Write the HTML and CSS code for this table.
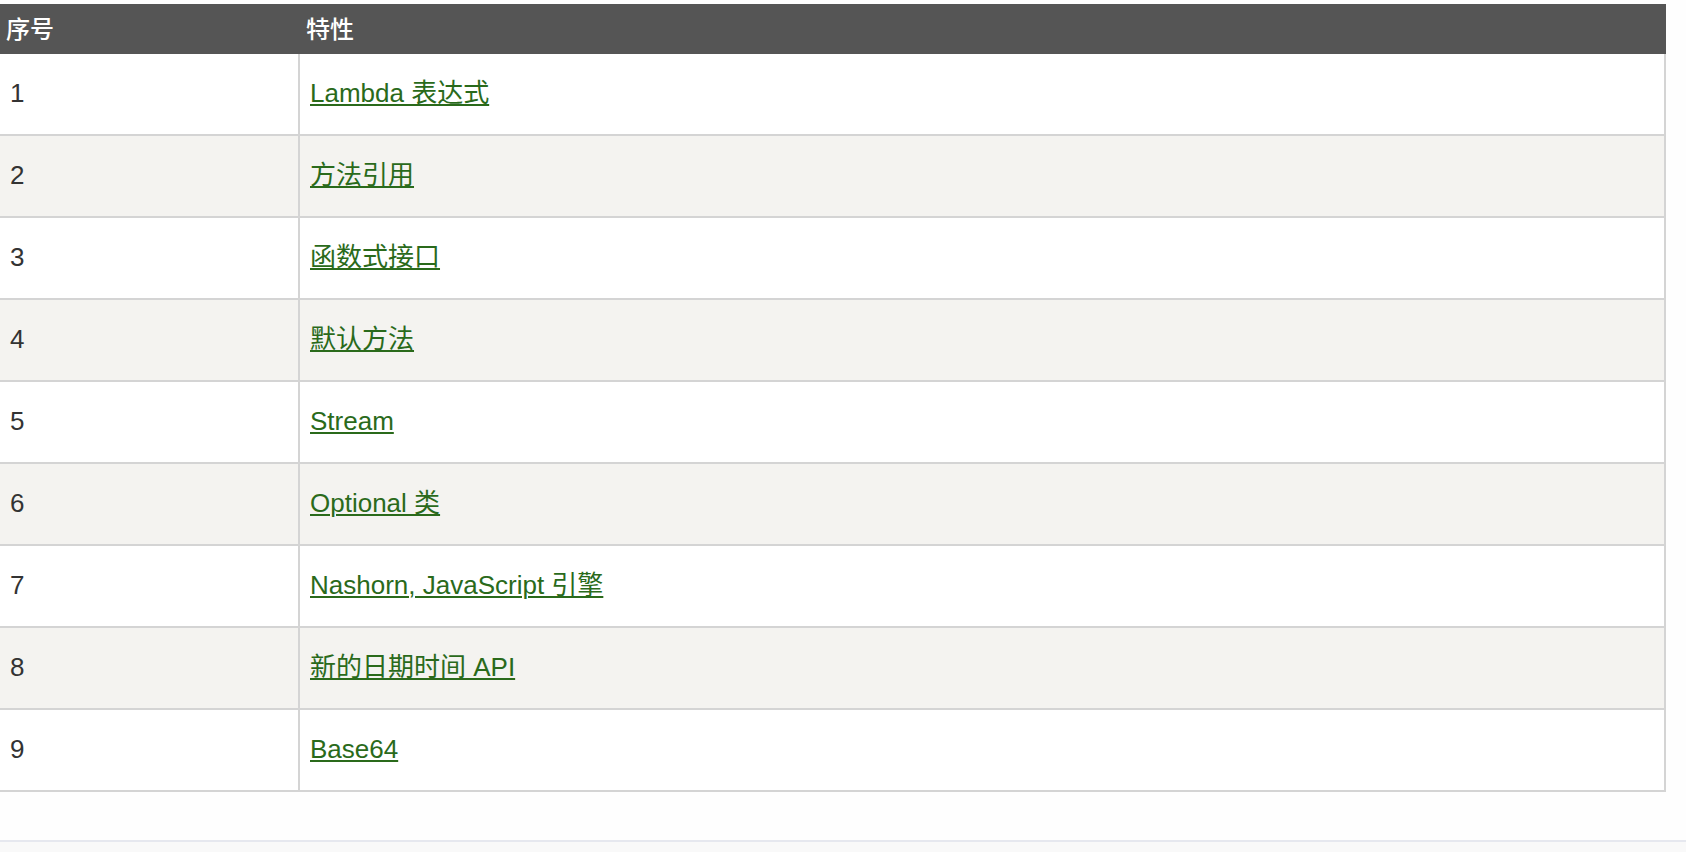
FILE: index.html
```html
<!DOCTYPE html>
<html lang="zh-CN">
<head>
<meta charset="utf-8">
<title>Java 8 新特性</title>
<link rel="stylesheet" href="styles.css">
</head>
<body>
<div class="page">
  <table class="features">
    <colgroup>
      <col class="col-num">
      <col class="col-feat">
    </colgroup>
    <thead>
      <tr><th>序号</th><th>特性</th></tr>
    </thead>
    <tbody>
      <tr><td>1</td><td><a href="#">Lambda 表达式</a></td></tr>
      <tr><td>2</td><td><a href="#">方法引用</a></td></tr>
      <tr><td>3</td><td><a href="#">函数式接口</a></td></tr>
      <tr><td>4</td><td><a href="#">默认方法</a></td></tr>
      <tr><td>5</td><td><a href="#">Stream</a></td></tr>
      <tr><td>6</td><td><a href="#">Optional 类</a></td></tr>
      <tr><td>7</td><td><a href="#">Nashorn, JavaScript 引擎</a></td></tr>
      <tr><td>8</td><td><a href="#">新的日期时间 API</a></td></tr>
      <tr><td>9</td><td><a href="#">Base64</a></td></tr>
    </tbody>
  </table>
  <div class="next-section"></div>
</div>
</body>
</html>
```
FILE: styles.css
```css
html, body {
  margin: 0;
  padding: 0;
  background: #fefefe;
}
body {
  font-family: "Liberation Sans", "Noto Sans CJK SC", sans-serif;
  color: #333333;
}
.page {
  padding-top: 4px;
  width: 1686px;
  height: 848px;
  display: flex;
  flex-direction: column;
  overflow: hidden;
}
.features {
  border-collapse: separate;
  border-spacing: 0;
  table-layout: fixed;
  width: 1666px;
}
.col-num { width: 300px; }
.col-feat { width: 1366px; }
.features th {
  background: #555555;
  color: #ffffff;
  font-size: 24px;
  font-weight: 500;
  line-height: 28px;
  text-align: left;
  height: 50px;
  padding: 2px 0 0 6px;
  box-sizing: border-box;
  vertical-align: middle;
}
.features th:first-child {
  border-right: 2px solid #555555;
}
.features td {
  font-size: 26px;
  line-height: 30px;
  height: 82px;
  box-sizing: border-box;
  padding: 0 0 2px 10px;
  border-bottom: 2px solid #d4d4d4;
  border-right: 2px solid #d4d4d4;
  vertical-align: middle;
}
.features tbody tr:nth-child(even) td {
  background: #f4f3f0;
}
.features tbody tr:nth-child(odd) td {
  background: #ffffff;
}
.features a {
  color: #2a6a1b;
  text-decoration: underline;
  text-decoration-thickness: 2px;
  text-underline-offset: 2px;
}
.next-section {
  margin-top: 48px;
  border-top: 2px solid #e6e8ef;
  background: #f9f9f9;
  flex: 1;
}
```
